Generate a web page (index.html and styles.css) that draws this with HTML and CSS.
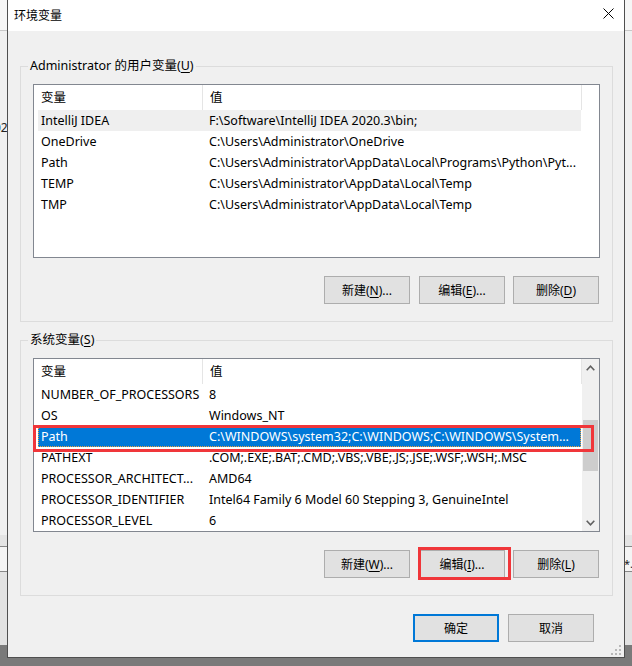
FILE: index.html
```html
<!DOCTYPE html>
<html lang="zh-CN">

<head>
  <meta charset="UTF-8">
  <title>环境变量</title>
  <link rel="stylesheet" href="styles.css">
</head>

<body>
  <div class="desktop">
    <span class="behind-text left-text">02</span>
    <span class="behind-text right-text">*.:</span>

    <div class="dialog">
      <div class="titlebar">
        <span class="title">环境变量</span>
        <span class="close">
          <svg width="11" height="11" viewBox="0 0 11 11">
            <path d="M0.5 0.5 L10.5 10.5 M10.5 0.5 L0.5 10.5" stroke="#000" stroke-width="1" fill="none" />
          </svg>
        </span>
      </div>

      <div class="dialog-body">
        <!-- user variables -->
        <section class="group">
          <div class="group-label">Administrator 的用户变量(<u>U</u>)</div>
          <div class="listview">
            <div class="lv-content">
              <div class="lv-header">
                <div class="hcol hcol-name">变量</div>
                <div class="hcol hcol-value">值</div>
              </div>
              <div class="lv-row hover"><span class="cell name">IntelliJ IDEA</span><span class="cell value">F:\Software\IntelliJ IDEA 2020.3\bin;</span></div>
              <div class="lv-row"><span class="cell name">OneDrive</span><span class="cell value">C:\Users\Administrator\OneDrive</span></div>
              <div class="lv-row"><span class="cell name">Path</span><span class="cell value">C:\Users\Administrator\AppData\Local\Programs\Python\Pyt...</span></div>
              <div class="lv-row"><span class="cell name">TEMP</span><span class="cell value">C:\Users\Administrator\AppData\Local\Temp</span></div>
              <div class="lv-row"><span class="cell name">TMP</span><span class="cell value">C:\Users\Administrator\AppData\Local\Temp</span></div>
            </div>
          </div>
          <div class="btn-row">
            <button class="btn">新建(<u>N</u>)...</button>
            <button class="btn">编辑(<u>E</u>)...</button>
            <button class="btn">删除(<u>D</u>)</button>
          </div>
        </section>

        <!-- system variables -->
        <section class="group">
          <div class="group-label">系统变量(<u>S</u>)</div>
          <div class="listview">
            <div class="lv-content">
              <div class="lv-header">
                <div class="hcol hcol-name">变量</div>
                <div class="hcol hcol-value">值</div>
              </div>
              <div class="lv-row"><span class="cell name">NUMBER_OF_PROCESSORS</span><span class="cell value">8</span></div>
              <div class="lv-row"><span class="cell name">OS</span><span class="cell value">Windows_NT</span></div>
              <div class="lv-row selected marked"><span class="cell name">Path</span><span class="cell value">C:\WINDOWS\system32;C:\WINDOWS;C:\WINDOWS\System...</span></div>
              <div class="lv-row"><span class="cell name">PATHEXT</span><span class="cell value">.COM;.EXE;.BAT;.CMD;.VBS;.VBE;.JS;.JSE;.WSF;.WSH;.MSC</span></div>
              <div class="lv-row"><span class="cell name">PROCESSOR_ARCHITECT...</span><span class="cell value">AMD64</span></div>
              <div class="lv-row"><span class="cell name">PROCESSOR_IDENTIFIER</span><span class="cell value">Intel64 Family 6 Model 60 Stepping 3, GenuineIntel</span></div>
              <div class="lv-row"><span class="cell name">PROCESSOR_LEVEL</span><span class="cell value">6</span></div>
            </div>
            <div class="scrollbar">
              <span class="arrow">
                <svg width="9" height="6" viewBox="0 0 9 6"><polyline points="0.7,5.2 4.5,1.2 8.3,5.2" fill="none" stroke="#606060" stroke-width="1.6" /></svg>
              </span>
              <div class="track">
                <div class="thumb"></div>
              </div>
              <span class="arrow">
                <svg width="9" height="6" viewBox="0 0 9 6"><polyline points="0.7,0.8 4.5,4.8 8.3,0.8" fill="none" stroke="#606060" stroke-width="1.6" /></svg>
              </span>
            </div>
          </div>
          <div class="btn-row">
            <button class="btn">新建(<u>W</u>)...</button>
            <button class="btn marked">编辑(<u>I</u>)...</button>
            <button class="btn">删除(<u>L</u>)</button>
          </div>
        </section>

        <div class="footer">
          <button class="btn default">确定</button>
          <button class="btn">取消</button>
        </div>
      </div>

      <svg class="grip" width="10" height="10" viewBox="0 0 10 10">
        <rect x="8" y="0" width="2" height="2" fill="#b8b8b8" />
        <rect x="4" y="4" width="2" height="2" fill="#b8b8b8" />
        <rect x="8" y="4" width="2" height="2" fill="#b8b8b8" />
        <rect x="0" y="8" width="2" height="2" fill="#b8b8b8" />
        <rect x="4" y="8" width="2" height="2" fill="#b8b8b8" />
        <rect x="8" y="8" width="2" height="2" fill="#b8b8b8" />
      </svg>
    </div>
  </div>
</body>

</html>
```

FILE: styles.css
```css
* {
  box-sizing: border-box;
}

body {
  margin: 0;
  font-family: "Noto Sans", "Noto Sans CJK SC", sans-serif;
  font-size: 12.5px;
  color: #000;
}

u {
  text-decoration-thickness: 1px;
  text-underline-offset: 2px;
}

/* windows lying under the dialog */
.desktop {
  width: 632px;
  height: 666px;
  position: relative;
  overflow: hidden;
  background: linear-gradient(#f6f6f6 0 30px, #c8c8c8 30px 31px, #f0f0f0 31px 535px, #e4e4e4 535px 546px,
      #888 546px 547px, #f4f4f4 547px 571px, #888 571px 572px, #e2e2e2 572px 645px, #7a7a7a 645px);
}

.behind-text {
  position: absolute;
  font-size: 12px;
  color: #222;
}

.left-text {
  left: -6px;
  top: 119px;
}

.right-text {
  left: 624px;
  top: 556px;
  font-size: 11px;
}

.dialog {
  position: absolute;
  left: 7px;
  top: 0;
  width: 618px;
  height: 658px;
  background: #f0f0f0;
  border: 1px solid #4f4f4f;
  border-top: none;
}

.titlebar {
  height: 31px;
  background: #fff;
  display: flex;
  align-items: center;
  justify-content: space-between;
  padding: 0 10px 2px 6px;
}

.title {
  font-size: 12px;
}

.close {
  display: flex;
  margin-top: -2px;
}

.dialog-body {
  padding: 35px 12px 0;
  display: flex;
  flex-direction: column;
  gap: 18px;
}

/* group boxes */
.group {
  position: relative;
  width: 593px;
  border: 1px solid #dcdcdc;
  padding: 17px 12px 17px;
}

.group-label {
  position: absolute;
  left: 7px;
  top: -9px;
  padding: 0 2px;
  line-height: 16px;
  background: #f0f0f0;
}

/* list views */
.listview {
  position: relative;
  height: 174px;
  border: 1px solid #828790;
  background: #fff;
  display: flex;
}

.lv-content {
  flex: 1;
}

.lv-header {
  display: flex;
  height: 25px;
  line-height: 25px;
}

.hcol {
  border-right: 1px solid #e5e5e5;
  padding-left: 7px;
}

.hcol-name {
  width: 169px;
}

.hcol-value {
  width: 379px;
}

.lv-row {
  position: relative;
  display: flex;
  margin-left: 4px;
  width: 543px;
  height: 21px;
  line-height: 21px;
  white-space: nowrap;
}

.lv-row.hover {
  background: #efefef;
}

.lv-row.selected {
  background: #0078d7;
  color: #fff;
  outline: 1px dotted #f2a13b;
  outline-offset: -1px;
}

.cell.name {
  width: 164px;
  padding-left: 3px;
  overflow: hidden;
}

.cell.value {
  padding-left: 7px;
}

.lv-row.marked::after {
  content: "";
  position: absolute;
  left: -5px;
  top: -1px;
  right: -13px;
  bottom: -5px;
  border: 3px solid #f0363a;
  z-index: 2;
}

.scrollbar {
  width: 17px;
  background: #f0f0f0;
  display: flex;
  flex-direction: column;
}

.arrow {
  height: 17px;
  display: flex;
  align-items: center;
  justify-content: center;
}

.track {
  flex: 1;
  padding-top: 44px;
}

.thumb {
  width: 15px;
  margin-left: 1px;
  height: 51px;
  background: #cdcdcd;
}

/* buttons */
.btn-row {
  display: flex;
  justify-content: flex-end;
  gap: 8px;
  margin-top: 18px;
  padding-right: 1px;
}

.btn-row .btn:first-child {
  margin-right: 1px;
}

.btn {
  position: relative;
  width: 86px;
  height: 28px;
  background: #e1e1e1;
  border: 1px solid #adadad;
  font: inherit;
  font-size: 12px;
  color: #000;
  padding: 0;
}

.btn.default {
  border: 2px solid #0078d7;
}

.btn.marked::after {
  content: "";
  position: absolute;
  left: -2px;
  top: -4px;
  right: -7px;
  bottom: -3px;
  border: 3px solid #f0363a;
}

.footer {
  display: flex;
  justify-content: flex-end;
  gap: 9px;
  padding-right: 18px;
}

.grip {
  position: absolute;
  right: 3px;
  bottom: 2px;
}
```
